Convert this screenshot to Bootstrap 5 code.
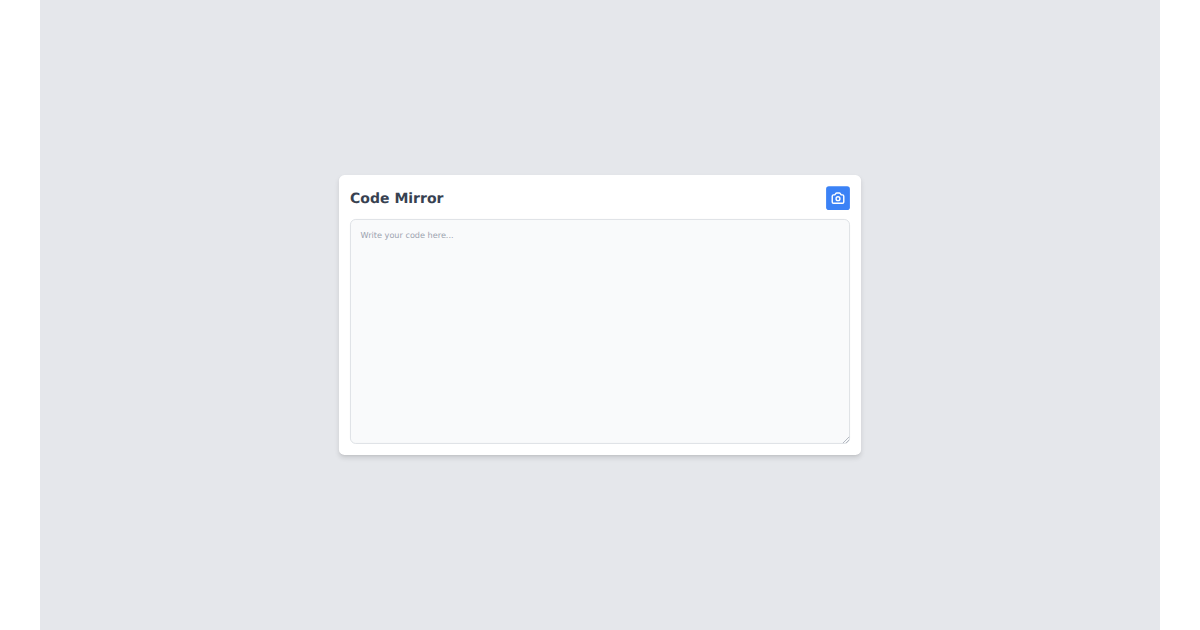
<!DOCTYPE html>
<html lang="en">
<head>
<meta charset="utf-8">
<title>Code Mirror</title>
<link href="https://cdn.jsdelivr.net/npm/bootstrap@5.3.0/dist/css/bootstrap.min.css" rel="stylesheet">
<style>
html, body { height: 100%; background: #fff; overflow: hidden; }
.stage { width: 1120px; height: 630px; margin: 0 auto; background: #e5e7eb; }
.panel { flex: none; width: 746px; height: 400px; padding: 16px; background: #fff; border-radius: 8px; box-shadow: 0 4px 8px -1px rgba(0,0,0,.12), 0 2px 4px -2px rgba(0,0,0,.1); transform: scale(.7); text-rendering: geometricPrecision; }
.panel-title { font-family: "DejaVu Sans", sans-serif; font-size: 20px; font-weight: 700; color: #374151; line-height: 35px; }
.shot-btn { width: 34px; height: 34px; background: #3b82f6; border: 0; border-radius: 4px; }
.code-input { resize: vertical; display: block; width: 100%; height: 321px; margin-top: 11.5px; padding: 14px; background: #f9fafb; border: 1px solid #d1d5db; border-radius: 8px; font-family: "DejaVu Sans", sans-serif; font-size: 11.6px; line-height: 16px; outline: 0; text-rendering: geometricPrecision; }
.code-input::placeholder { color: #9ca3af; opacity: 1; }
.code-input::-webkit-resizer { background: linear-gradient(135deg, transparent 66%, #b4b9c2 66%, #b4b9c2 72%, transparent 72%, transparent 82%, #b4b9c2 82%, #b4b9c2 88%, transparent 88%); }
</style>
</head>
<body>
<div class="stage d-flex align-items-center justify-content-center">
  <div class="panel">
    <div class="d-flex align-items-start justify-content-between">
      <h1 class="panel-title m-0">Code Mirror</h1>
      <button type="button" class="shot-btn d-flex align-items-center justify-content-center p-0" aria-label="Take screenshot">
        <svg width="22" height="22" viewBox="0 0 24 24" fill="none" stroke="#fff" stroke-width="2.2" stroke-linecap="round" stroke-linejoin="round"><path d="M3 9a2 2 0 0 1 2-2h.93a2 2 0 0 0 1.66-.89l.82-1.22A2 2 0 0 1 10.07 4h3.86a2 2 0 0 1 1.66.89l.82 1.22A2 2 0 0 0 18.07 7H19a2 2 0 0 1 2 2v9a2 2 0 0 1-2 2H5a2 2 0 0 1-2-2z"/><circle cx="12" cy="13" r="3"/></svg>
      </button>
    </div>
    <textarea class="code-input" placeholder="Write your code here..."></textarea>
  </div>
</div>
<script src="https://cdn.jsdelivr.net/npm/bootstrap@5.3.0/dist/js/bootstrap.bundle.min.js"></script>
</body>
</html>
